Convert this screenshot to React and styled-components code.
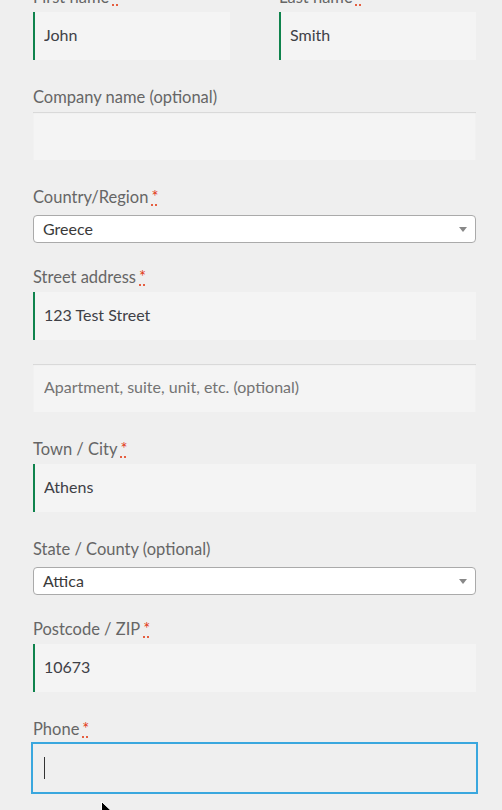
import React from "react";
import styled, { createGlobalStyle } from "styled-components";

const GlobalStyle = createGlobalStyle`
  html, body { margin: 0; padding: 0; }
  body {
    background: #efefef;
    font-family: Lato, "Liberation Sans", sans-serif;
    overflow: hidden;
  }
  * { box-sizing: border-box; }
`;

const Page = styled.form`
  width: 502px;
  padding: 0 26px 0 33px;
  margin-top: -16px;
  display: flex;
  flex-direction: column;
`;

const Row = styled.div`
  display: grid;
  grid-template-columns: 197px 197px;
  column-gap: 49px;
`;

const Field = styled.div`
  display: flex;
  flex-direction: column;
  margin-bottom: ${(p) => (p.$select ? "21px" : "24px")};
`;

const Label = styled.label`
  font-size: 16.5px;
  line-height: 26px;
  color: #666;
  margin-bottom: ${(p) => (p.$select ? "5px" : "2px")};
  white-space: nowrap;
`;

const Required = styled.abbr`
  color: #e2401c;
  text-decoration: underline dotted;
  text-underline-offset: 2px;
  margin-left: 3px;
  cursor: help;
`;

const Stack = styled.div`
  display: flex;
  flex-direction: column;
  gap: 24px;
`;

const TextInput = styled.input`
  display: block;
  width: 100%;
  height: 48px;
  border: 0;
  margin: 0;
  padding: 0 10px 4px 11px;
  background: ${(p) => (p.$focused ? "#efefef" : "#f4f4f4")};
  font-family: inherit;
  font-size: 16px;
  color: #3e4046;
  box-shadow: ${(p) =>
    p.$valid ? "inset 2px 0 0 #0f834d" : p.$focused ? "none" : "inset 0 1px 1px rgba(0,0,0,0.125)"};
  outline: ${(p) => (p.$focused ? "2px solid #3aa7de" : "none")};
  outline-offset: 0;
  &::placeholder { color: #737373; opacity: 1; }
`;

const InputWrap = styled.div`
  position: relative;
`;

const Caret = styled.span`
  position: absolute;
  left: 11px;
  top: 13px;
  width: 1px;
  height: 22px;
  background: #333;
`;

const Pointer = styled.svg`
  position: absolute;
  left: 68px;
  top: 57px;
  width: 14px;
  height: 20px;
  overflow: visible;
`;

const SelectBox = styled.div`
  height: 28px;
  background: #fff;
  border: 1px solid #aaa;
  border-radius: 4px;
  display: flex;
  align-items: center;
  justify-content: space-between;
  padding: 0 8px 1px 9px;
  font-size: 16px;
  color: #3a3a3a;
`;

const Arrow = styled.span`
  width: 0;
  height: 0;
  border-style: solid;
  border-width: 5px 4px 0 4px;
  border-color: #888 transparent transparent transparent;
  margin-top: 1px;
`;

function Req() {
  return <Required title="required">*</Required>;
}

function TextField({ label, required, value, placeholder, valid, focused, select }) {
  return (
    <Field $select={select}>
      <Label $select={select}>
        {label}
        {required && <Req />}
      </Label>
      {select ? (
        <SelectBox>
          <span>{value}</span>
          <Arrow />
        </SelectBox>
      ) : focused ? (
        <InputWrap>
          <TextInput $focused readOnly value="" />
          <Caret />
          <Pointer viewBox="0 0 14 20">
            <path d="M0.5 0.5 L0.5 16 L4.3 12.4 L7 18.5 L9.6 17.3 L7 11.4 L12 11.4 Z" fill="#000" stroke="#fff" strokeWidth="1" />
          </Pointer>
        </InputWrap>
      ) : (
        <TextInput readOnly value={value || ""} placeholder={placeholder} $valid={valid} />
      )}
    </Field>
  );
}

export default function App() {
  return (
    <>
      <GlobalStyle />
      <Page onSubmit={(e) => e.preventDefault()}>
        <Row>
          <TextField label="First name" required value="John" valid />
          <TextField label="Last name" required value="Smith" valid />
        </Row>
        <TextField label="Company name (optional)" value="" />
        <TextField label="Country/Region" required value="Greece" select />
        <Field>
          <Label>
            Street address
            <Req />
          </Label>
          <Stack>
            <TextInput readOnly value="123 Test Street" $valid />
            <TextInput readOnly value="" placeholder="Apartment, suite, unit, etc. (optional)" />
          </Stack>
        </Field>
        <TextField label="Town / City" required value="Athens" valid />
        <TextField label="State / County (optional)" value="Attica" select />
        <TextField label="Postcode / ZIP" required value="10673" valid />
        <TextField label="Phone" required focused />
      </Page>
    </>
  );
}
